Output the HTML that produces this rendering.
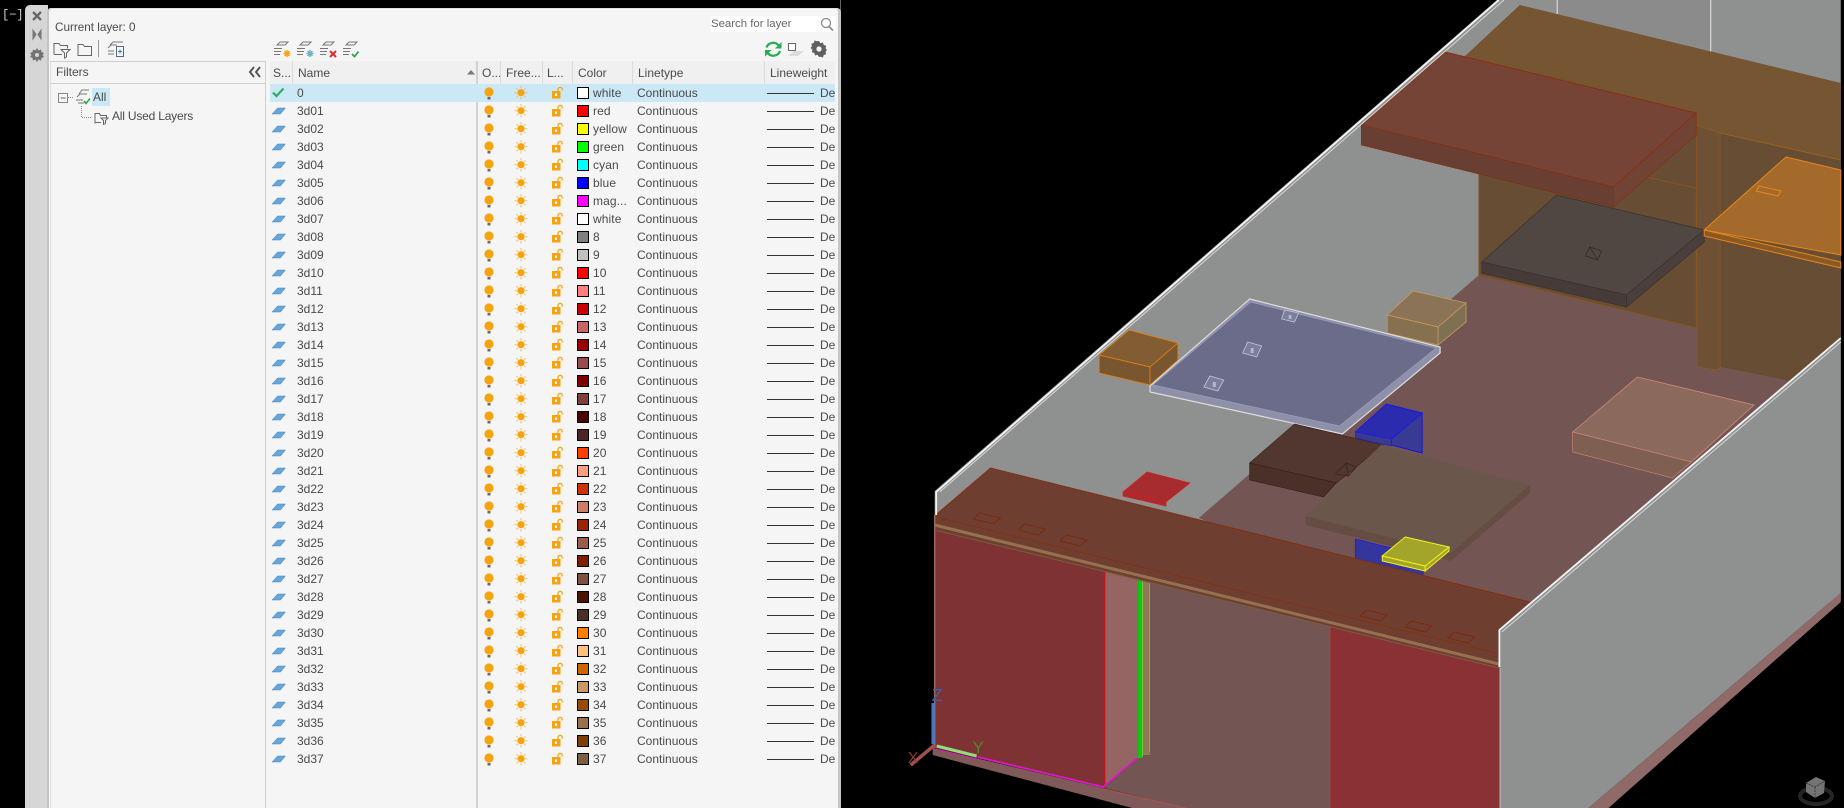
<!DOCTYPE html>
<html lang="en"><head><meta charset="utf-8"><title>Layer Properties</title>
<style>
html,body{margin:0;padding:0;background:#000;width:1844px;height:808px;overflow:hidden}
body{position:relative;font:12px/18px "Liberation Sans",sans-serif;color:#4a4a4a}
.a{position:absolute}
#vp{position:absolute;left:0;top:0}
#strip{position:absolute;left:25px;top:5px;width:23px;height:803px;background:#d6d6d6;border-radius:5px 0 0 0}
#panel{position:absolute;left:48px;top:8px;width:789px;height:800px;background:#f5f5f5;border-left:2px solid #c4c4c4;border-right:3px solid #c6c6c6;border-top:1px solid #e0e0e0;border-radius:4px 4px 0 0;box-sizing:content-box;margin-left:-1px}
#filters{position:absolute;left:50px;top:61px;width:214px;height:747px;border:1px solid #cfcfcf;border-bottom:0;border-left:1px solid #dedede;background:#f5f5f5;box-sizing:content-box}
#fh{height:21px;border-bottom:1px solid #d2d2d2;padding-left:5px;line-height:20px}
#lh{position:absolute;left:270px;top:61px;width:565px;height:23px;background:#f0f0f0}
#lh span{position:absolute;top:0;line-height:24px;height:23px;border-right:1px solid #dcdcdc;box-sizing:border-box;padding-left:4px;white-space:nowrap;overflow:hidden}
#sep{position:absolute;left:476px;top:61px;width:2px;height:747px;background:#d2d2d2}
#rows{position:absolute;left:270px;top:84px;width:565px}
.r{position:relative;height:18px;width:565px;overflow:hidden;white-space:nowrap}
.r svg{position:absolute;left:0;top:0;width:565px;height:18px}
.r b,.r u,.r em,.r s,.r i{position:absolute;font-weight:normal;font-style:normal;text-decoration:none}
.r b{left:27px}
.r i{left:307px;top:3px;width:12px;height:12px;border:1px solid #000;box-sizing:border-box}
.r u{left:323px;letter-spacing:.1px}
.r em{left:367px}
.r s{left:550px;width:15px;overflow:hidden}
</style></head><body>
<svg id="vp" width="1844" height="808" viewBox="0 0 1844 808">
<text x="2" y="18" font-family="Liberation Mono,monospace" font-size="12" fill="#cfcfcf">[−][</text>
<line x1="840.5" y1="0" x2="840.5" y2="808" stroke="#666"/>
<g transform="translate(840 0) scale(.9968 1) translate(-840 0)">
<!-- gray wall -->
<polygon points="1499,0 1844,0 1844,340 1502,640 935,530 935,491" fill="#8f9190"/>
<polygon points="1559,0 1713,0 1713,50 1559,14" fill="#8b8b8b"/>
<line x1="1559.5" y1="0" x2="1559.5" y2="14" stroke="#e8e8e8"/>
<line x1="1713.5" y1="0" x2="1713.5" y2="52" stroke="#e8e8e8"/>
<!-- floor -->
<polygon points="1481,275 1700,328 1700,367 1720,370 1723,367 1787,380 1844,400 1844,600 1502,640 1200,518" fill="#735553"/>
<!-- back wall -->
<polygon points="1522,5 1844,83 1844,160 1723,133 1481,172 1466,57" fill="#755532"/>
<polygon points="1481,100 1723,133 1844,160 1844,400 1787,380 1723,367 1700,328 1481,275" fill="#664d33"/>
<polygon points="1699,125 1723,133 1723,367 1720,370 1700,367" fill="#6e5135" stroke="#8e5a20" stroke-width=".7"/>
<polyline points="1649,177 1699,188 1699,328" fill="none" stroke="#87551f"/>
<polyline points="1723,133 1844,160" fill="none" stroke="#9a6020"/>
<polyline points="1481,173 1481,275 1700,328" fill="none" stroke="#85541f"/>
<!-- dark grey box -->
<polygon points="1559,195 1707,230 1629,295 1484,262" fill="#504642" stroke="#3d322f" stroke-width=".8"/>
<polygon points="1484,262 1629,295 1629,307 1484,273" fill="#463b38" stroke="#3d322f" stroke-width=".8"/>
<polygon points="1629,295 1707,230 1707,242 1629,307" fill="#4a3f3c" stroke="#3d322f" stroke-width=".8"/>
<polygon points="1592,247 1604,251 1600,260 1588,256" fill="none" stroke="#3a2e2a"/><line x1="1592" y1="247" x2="1600" y2="260" stroke="#3a2e2a"/>
<!-- red slab -->
<polygon points="1447,52 1699,113 1616,187 1363,125" fill="#754436" stroke="#8c2f10"/>
<polygon points="1363,125 1616,187 1616,207 1363,145" fill="#6a3f33" stroke="#80300f" stroke-width=".7"/>
<polygon points="1616,187 1699,113 1699,135 1616,207" fill="#704335" stroke="#8c2f10" stroke-width=".7"/>
<!-- orange box -->
<polygon points="1789,157 1844,170 1844,255 1707,230" fill="#a36a2b" stroke="#e8861a"/>
<polygon points="1707,230 1844,262 1844,268 1707,236" fill="#8a5a25" stroke="#e8861a"/>
<polygon points="1762,186 1784,191 1781,196 1759,191" fill="none" stroke="#e8861a"/>
<!-- tan box -->
<polygon points="1415,291 1468,303 1440,327 1389,315" fill="#8b7357" stroke="#c79a5c" stroke-width=".8"/>
<polygon points="1389,315 1440,327 1440,345 1389,333" fill="#85704f" stroke="#c79a5c" stroke-width=".8"/>
<polygon points="1440,327 1468,303 1468,322 1440,345" fill="#807052" stroke="#c79a5c" stroke-width=".8"/>
<!-- orange small box -->
<polygon points="1130,330 1179,343 1151,367 1100,355" fill="#825c32" stroke="#e4810e" stroke-width=".8"/>
<polygon points="1100,355 1151,367 1151,385 1100,373" fill="#7a5630" stroke="#e4810e" stroke-width=".8"/>
<polygon points="1151,367 1179,343 1179,360 1151,385" fill="#7a5630" stroke="#e4810e" stroke-width=".8"/>
<!-- plate -->
<polygon points="1251,299 1442,347 1442,353 1344,434 1151,392 1151,386" fill="#8e90aa" stroke="#ddd" stroke-width="1.2"/>
<polygon points="1252,302 1438,348 1341,426 1154,385" fill="#6a6c8a" stroke="#9a9cb8" stroke-width=".8"/>
<g fill="#7c7e9c" stroke="#c6c7d8" stroke-width=".8">
<polygon points="1286,310 1300,313 1296,322 1283,319"/>
<polygon points="1249,342 1263,346 1258,357 1244,353"/>
<polygon points="1211,376 1225,380 1219,391 1205,387"/>
</g>
<g fill="#b4b6ca">
<rect x="1290" y="315" width="3" height="4"/>
<rect x="1252" y="348" width="3" height="5"/>
<rect x="1214" y="382" width="3" height="5"/>
</g>
<!-- pink box -->
<polygon points="1640,377 1757,405 1694,462 1575,432" fill="#8b6a5d" stroke="#d48a78" stroke-width=".8"/>
<polygon points="1575,432 1694,462 1675,478 1575,452" fill="#7e5f52" stroke="#c88373" stroke-width=".7"/>
<!-- blue box -->
<polygon points="1424,413 1424,453 1393,445 1393,439" fill="#393a94" stroke="#1414e6" stroke-width="1"/>
<polygon points="1388,404 1424,413 1393,439 1357,432" fill="#2b2bae" stroke="#1a1ae8" stroke-width="1"/>
<polygon points="1357,432 1393,439 1393,446 1357,438" fill="#3a3a90" stroke="#1a1ae8" stroke-width=".6"/>
<polygon points="1357,539 1393,548 1425,570 1425,576 1357,559" fill="#35359e" stroke="#1a1ae8" stroke-width=".8"/>
<!-- dark brown box -->
<polygon points="1296,424 1385,445 1338,483 1251,463" fill="#523730" stroke="#41271f" stroke-width=".7"/>
<polygon points="1251,463 1338,483 1325,497 1251,480" fill="#4a3029" stroke="#3a2019" stroke-width=".7"/>
<!-- big floating box -->
<polygon points="1383,445 1532,485 1453,553 1307,516" fill="#6b564c"/>
<polygon points="1307,516 1453,553 1453,561 1307,525" fill="#664d43"/>
<polygon points="1453,553 1532,485 1532,493 1453,561" fill="#664d43"/>
<polygon points="1348,463 1358,467 1350,476 1337,474" fill="none" stroke="#3a2a22"/>
<line x1="1348" y1="463" x2="1350" y2="476" stroke="#3a2a22"/>
<!-- yellow -->
<polygon points="1384,556 1427,566 1427,571 1384,561" fill="#a3a42a" stroke="#f2f21e"/>
<polygon points="1451,547 1427,566 1427,571 1451,551" fill="#a3a42a" stroke="#f2f21e"/>
<polygon points="1407,537 1451,547 1427,566 1384,556" fill="#a3a42a" stroke="#f2f21e"/>
<!-- red square -->
<polygon points="1148,472 1191,483 1167,502 1124,492" fill="#a62c30" stroke="#d81c1c" stroke-width=".8"/>
<polygon points="1124,492 1167,502 1167,506 1124,496" fill="#a62c30" stroke="#d81c1c" stroke-width=".8"/>
<!-- front center -->
<polygon points="1151,560 1333,610 1333,808 1187,808 1105,788 1139,758" fill="#735553"/>
<!-- left red panel -->
<polygon points="935,515 1105,556 1105,788 935,748" fill="#7f3233"/>
<line x1="1105" y1="556" x2="1105" y2="788" stroke="#c5141c" stroke-width="2"/>
<line x1="935" y1="515" x2="935" y2="748" stroke="#9a6a58" stroke-width="1.5"/>
<!-- jamb -->
<polygon points="1106,560 1139,570 1139,758 1106,787" fill="#946563"/>
<rect x="1139" y="570" width="4" height="188" fill="#0ec80e"/>
<rect x="1143" y="572" width="8" height="183" fill="#8f7a55"/>
<line x1="1143.500" y1="572" x2="1143.500" y2="757" stroke="#74c040"/>
<line x1="1150.500" y1="572" x2="1150.500" y2="752" stroke="#b2944e"/>
<!-- right red panel -->
<polygon points="1333,610 1503,650 1503,808 1333,808" fill="#8a3233"/>
<line x1="1333" y1="610" x2="1333" y2="808" stroke="#c5141c" stroke-width="1.500"/>
<!-- right wall -->
<polygon points="1501.500,630 1844,338 1844,593 1591,808 1501.500,808" fill="#8f9190"/>
<polygon points="1844,593 1844,602 1611,808 1591,808" fill="#8f6a68"/>
<line x1="1502.500" y1="668" x2="1502.500" y2="808" stroke="#a8a8a8" stroke-width="1.500"/>
<!-- beam -->
<polygon points="991,468 1532,602 1501,630 1501,667 936,530 936,515" fill="#6e3f31"/>
<polyline points="936,515 991,468 1532,602" fill="none" stroke="#842f14"/>
<line x1="936" y1="517" x2="1498" y2="653" stroke="#842f14"/>
<line x1="935" y1="525" x2="1501" y2="664" stroke="#96704f" stroke-width="3"/>
<line x1="935" y1="530" x2="1501" y2="668" stroke="#7a5c45" stroke-width="1"/>
<g fill="none" stroke="#7c2a10" stroke-width="1.100">
<polygon points="980,513 1001,518 994,524 974,519"/>
<polygon points="1025,524 1046,529 1039,535 1019,530"/>
<polygon points="1067,535 1088,540 1081,546 1061,541"/>
<polygon points="1368,610 1389,615 1382,621 1362,616"/>
<polygon points="1413,621 1434,626 1427,632 1407,627"/>
<polygon points="1456,632 1477,637 1470,643 1450,638"/>
</g>
<!-- wall white lines -->
<polyline points="1501,0 936.500,492 936.500,515" fill="none" stroke="#f4f4f4" stroke-width="1.800"/>
<line x1="1506" y1="0" x2="940" y2="492" stroke="#d8d8d8" stroke-width="1"/>
<polyline points="1844,338 1501.500,630 1501.500,667" fill="none" stroke="#f4f4f4" stroke-width="1.800"/>
<line x1="1844" y1="342" x2="1504" y2="632" stroke="#d8d8d8" stroke-width="1"/>
<!-- bottom strip -->
<polygon points="933,748 1104,788 1187,808 1133,808 933,755" fill="#7f5a58"/>
<line x1="1105" y1="789" x2="1187" y2="808" stroke="#b0504c"/>
<polyline points="978,757 1104,787 1138,758" fill="none" stroke="#dd18c8" stroke-width="1.800"/>
<line x1="936" y1="749" x2="978" y2="759" stroke="#d818c0"/>
<!-- UCS -->
<line x1="937" y1="746" x2="977" y2="756" stroke="#8fe07a" stroke-width="3"/>
<line x1="933.500" y1="703" x2="933.500" y2="744" stroke="#4d77b8" stroke-width="3.500"/>
<line x1="935" y1="745" x2="911" y2="765" stroke="#a05050" stroke-width="3.500"/>
<text x="932" y="701" font-family="Liberation Sans,sans-serif" font-size="18" fill="#3c5fa8">Z</text>
<text x="973" y="753" font-family="Liberation Sans,sans-serif" font-size="17" fill="#4f8a2e">Y</text>
<text x="908" y="763" font-family="Liberation Sans,sans-serif" font-size="16" fill="#8a3a38">X</text>
</g>
<!-- viewcube -->
<ellipse cx="1816" cy="796" rx="16" ry="8" fill="none" stroke="#262626" stroke-width="4"/>
<polygon points="1806,783 1816,777 1825,781 1824,793 1815,798 1806,792" fill="#747474"/>
<polyline points="1806,783 1815,787 1825,781" fill="none" stroke="#3c3c3c" stroke-dasharray="2 1"/>
<line x1="1815" y1="787" x2="1815" y2="798" stroke="#3c3c3c" stroke-dasharray="2 1"/>
</svg>

<div id="strip"></div>
<div id="panel"></div>
<svg class="a" style="left:25px;top:5px" width="23" height="70" viewBox="0 0 23 70">
<path d="M8 7l8 8M16 7l-8 8" stroke="#666" stroke-width="2.300"/>
<path d="M8 25v9l3-4.500zM16 25v9l-3-4.500z" fill="#777" stroke="#777"/>
<path d="M12 43l1.500 2.500 2.500-1 .5 2.500 2.500 1-1.500 2 1.500 2-2.500 1-.5 2.500-2.500-1-1.500 2.500-1.500-2.500-2.500 1-.5-2.500-2.500-1 1.500-2-1.500-2 2.500-1 .5-2.500 2.500 1z" fill="#737373"/>
<circle cx="12" cy="50" r="2" fill="#d6d6d6"/>
</svg>

<div class="a" style="left:55px;top:19px;font-size:11.7px">Current layer: 0</div>
<div class="a" style="left:711px;top:16px;width:125px;height:16px;background:#fff"></div>
<div class="a" style="left:711px;top:15px;color:#666;font-size:11.400px">Search for layer</div>
<svg class="a" style="left:818px;top:16px" width="18" height="16" viewBox="0 0 18 16"><circle cx="8" cy="7" r="4.500" fill="none" stroke="#8a8a8a" stroke-width="1.300"/><path d="M11 10.500l4 4" stroke="#8a8a8a" stroke-width="1.800"/></svg>

<!-- left toolbar -->
<svg class="a" style="left:50px;top:37px" width="80" height="22" viewBox="0 0 80 22" fill="none" stroke="#666">
<path d="M4 17.500V6.500h5l1.500 2h7v3"/><path d="M4 17.500h8"/><path d="M11 12.500h9l-3.500 3.500v4l-2 1v-5z" fill="#f5f5f5"/>
<path d="M28 18.500V7.500h5l1.500 2h7v9z"/>
<path d="M48.500 3v17" stroke="#999"/>
<path d="M60 8l3-3h10M58 11l3-3h6M58 14h6M58 17h6" stroke="#777"/><rect x="66.500" y="9.500" width="7" height="10" stroke="#5a6a78"/><path d="M68 14.500h4M70 12.500v4" stroke="#3e7fb0"/>
</svg>
<div id="filters"><div id="fh">Filters</div></div>
<svg class="a" style="left:248px;top:66px" width="14" height="12" viewBox="0 0 14 12" fill="none" stroke="#555" stroke-width="2"><path d="M6 1L2 6l4 5M12 1L8 6l4 5"/></svg>

<!-- tree -->
<svg class="a" style="left:54px;top:86px" width="60" height="40" viewBox="0 0 60 40" fill="none">
<rect x="4.500" y="7.500" width="9" height="9" stroke="#888" fill="#f7f7f7"/><path d="M6.500 12h5" stroke="#666"/>
<path d="M14 11.500h6M27.500 20v11.500h10" stroke="#888" stroke-dasharray="1 1"/>
<path d="M25 8l3-4h7M23 11l3-3h7M22 14h7M24 17h6" stroke="#777"/><path d="M30 15l2 2.500 4-5" stroke="#2fa24a" stroke-width="1.600"/>
<path d="M41 37.500V27.500h4.500l1 2h6v2M41 36.500h6M47 32h7l-2.500 2.500v3l-2 1v-4z" stroke="#666"/>
</svg>
<div class="a" style="left:92px;top:88px;width:18px;height:18px;background:#cbe8f6;padding-left:1px;box-sizing:border-box;overflow:hidden">All</div>
<div class="a" style="left:112px;top:107px;letter-spacing:-.2px">All Used Layers</div>

<!-- list toolbar -->
<svg class="a" style="left:271px;top:39px" width="90" height="20" viewBox="0 0 90 20" fill="none" stroke="#777">
<g id="st"><path d="M6 6l3-3h8l-3 3zM3 9.500h8M3 12.500h7M3 15.500h6"/></g>
<path d="M16 11v7M12.500 14.500h7M13.500 12l5 5M18.500 12l-5 5" stroke="#f4a612" stroke-width="1.500"/>
<use href="#st" x="23"/><path d="M39 11v7M35.500 14.500h7M36.500 12l5 5M41.500 12l-5 5" stroke="#6fb3c8" stroke-width="1.500"/>
<use href="#st" x="46"/><path d="M59 12l6 6M65 12l-6 6" stroke="#e02a2a" stroke-width="2"/>
<use href="#st" x="69"/><path d="M81 15l2.500 2.500 4-5" stroke="#2fa24a" stroke-width="1.800"/>
</svg>
<!-- refresh etc -->
<svg class="a" style="left:762px;top:39px" width="70" height="20" viewBox="0 0 70 20" fill="none">
<path d="M4.500 8.500A7 7 0 0 1 17 7M18 12A7 7 0 0 1 5.500 13.500" stroke="#28ad56" stroke-width="2.300"/>
<path d="M19.500 3v6.500h-6.500zM3 17.500V11h6.500z" fill="#28ad56"/>
<rect x="26.500" y="4.500" width="7" height="7" fill="#fff" stroke="#666"/>
<path d="M26 17l6-5h10l-6 5z" fill="#dcdcdc"/>
<path d="M57 3l1.500 2.200 2.500-.7.700 2.500 2.500.7-.7 2.500 1.500 1.800-1.500 1.800.7 2.500-2.500.7-.7 2.500-2.500-.7L57 19l-1.500-2.200-2.500.7-.7-2.500-2.500-.7.700-2.500L48.500 10l1.500-1.800-.7-2.500 2.500-.7.700-2.500 2.500.7z" fill="#606060" transform="translate(0 -1)"/>
<circle cx="57" cy="10" r="2.600" fill="#f5f5f5"/>
</svg>

<div id="lh">
<span style="left:0;width:23px;padding-left:3px">S...</span>
<span style="left:23px;width:184px;padding-left:5px">Name</span>
<span style="left:208px;width:23px">O...</span>
<span style="left:231px;width:42px;padding-left:5px">Free...</span>
<span style="left:273px;width:30px">L...</span>
<span style="left:303px;width:60px;padding-left:5px">Color</span>
<span style="left:363px;width:132px;padding-left:5px">Linetype</span>
<span style="left:495px;width:70px;padding-left:5px;border:0">Lineweight</span>
</div>
<svg class="a" style="left:467px;top:69px" width="8" height="6" viewBox="0 0 8 6"><path d="M0 5.500L4 1l4 4.500z" fill="#777"/></svg>
<div id="sep"></div>

<svg width="0" height="0" style="position:absolute">
<symbol id="c" viewBox="0 0 565 18" width="565" height="18">
<circle cx="219" cy="8" r="4.600" fill="#f5a30f"/><rect x="217.500" y="13" width="3" height="2.500" fill="#6a6a6a"/>
<circle cx="251" cy="8.700" r="3.600" fill="#f5a30f"/>
<g stroke="#f7bf5e" stroke-width="1"><path d="M251 2v2.500M251 13v2.500M244.500 8.700h2.500M255 8.700h2.500M246.400 4.100l1.500 1.500M254.100 11.800l1.500 1.500M246.400 13.300l1.500-1.500M254.100 5.600l1.500-1.500"/></g>
<rect x="282" y="7" width="8.500" height="7.500" fill="#f5a30f"/><rect x="285" y="9.500" width="2" height="2.500" fill="#fff"/>
<path d="M288 7V5.500a2.100 2.100 0 0 1 4.200 0V6.500" fill="none" stroke="#f5a30f" stroke-width="1.300"/>
<rect x="497" y="9" width="47" height="1" fill="#333"/>
</symbol>
<symbol id="l" viewBox="0 0 30 18" width="30" height="18"><polygon points="2,12 7.500,6 15.500,6 10.500,12" fill="#66a6da" stroke="#4b87ba" stroke-width=".5"/></symbol>
<symbol id="k" viewBox="0 0 30 18" width="30" height="18"><path d="M3 8.500l3.500 3.500 7-7.500" fill="none" stroke="#2fae5a" stroke-width="2.200"/></symbol>
</svg>

<div class="a" style="left:270px;top:84px;width:565px;height:18px;background:#cbe8f6"></div>
<div id="rows">
<div class="r"><svg><use href="#k"/><use href="#c"/></svg><b>0</b><i style="background:#fff"></i><u>white</u><em>Continuous</em><s>De</s></div>
<div class="r"><svg><use href="#l"/><use href="#c"/></svg><b>3d01</b><i style="background:#f00"></i><u>red</u><em>Continuous</em><s>De</s></div>
<div class="r"><svg><use href="#l"/><use href="#c"/></svg><b>3d02</b><i style="background:#ff0"></i><u>yellow</u><em>Continuous</em><s>De</s></div>
<div class="r"><svg><use href="#l"/><use href="#c"/></svg><b>3d03</b><i style="background:#0f0"></i><u>green</u><em>Continuous</em><s>De</s></div>
<div class="r"><svg><use href="#l"/><use href="#c"/></svg><b>3d04</b><i style="background:#0ff"></i><u>cyan</u><em>Continuous</em><s>De</s></div>
<div class="r"><svg><use href="#l"/><use href="#c"/></svg><b>3d05</b><i style="background:#00f"></i><u>blue</u><em>Continuous</em><s>De</s></div>
<div class="r"><svg><use href="#l"/><use href="#c"/></svg><b>3d06</b><i style="background:#f0f"></i><u>mag...</u><em>Continuous</em><s>De</s></div>
<div class="r"><svg><use href="#l"/><use href="#c"/></svg><b>3d07</b><i style="background:#fff"></i><u>white</u><em>Continuous</em><s>De</s></div>
<div class="r"><svg><use href="#l"/><use href="#c"/></svg><b>3d08</b><i style="background:#808080"></i><u>8</u><em>Continuous</em><s>De</s></div>
<div class="r"><svg><use href="#l"/><use href="#c"/></svg><b>3d09</b><i style="background:#c0c0c0"></i><u>9</u><em>Continuous</em><s>De</s></div>
<div class="r"><svg><use href="#l"/><use href="#c"/></svg><b>3d10</b><i style="background:#f00"></i><u>10</u><em>Continuous</em><s>De</s></div>
<div class="r"><svg><use href="#l"/><use href="#c"/></svg><b>3d11</b><i style="background:#ff7f7f"></i><u>11</u><em>Continuous</em><s>De</s></div>
<div class="r"><svg><use href="#l"/><use href="#c"/></svg><b>3d12</b><i style="background:#c00"></i><u>12</u><em>Continuous</em><s>De</s></div>
<div class="r"><svg><use href="#l"/><use href="#c"/></svg><b>3d13</b><i style="background:#c66"></i><u>13</u><em>Continuous</em><s>De</s></div>
<div class="r"><svg><use href="#l"/><use href="#c"/></svg><b>3d14</b><i style="background:#900"></i><u>14</u><em>Continuous</em><s>De</s></div>
<div class="r"><svg><use href="#l"/><use href="#c"/></svg><b>3d15</b><i style="background:#994c4c"></i><u>15</u><em>Continuous</em><s>De</s></div>
<div class="r"><svg><use href="#l"/><use href="#c"/></svg><b>3d16</b><i style="background:#7f0000"></i><u>16</u><em>Continuous</em><s>De</s></div>
<div class="r"><svg><use href="#l"/><use href="#c"/></svg><b>3d17</b><i style="background:#7f3f3f"></i><u>17</u><em>Continuous</em><s>De</s></div>
<div class="r"><svg><use href="#l"/><use href="#c"/></svg><b>3d18</b><i style="background:#4c0000"></i><u>18</u><em>Continuous</em><s>De</s></div>
<div class="r"><svg><use href="#l"/><use href="#c"/></svg><b>3d19</b><i style="background:#4c2626"></i><u>19</u><em>Continuous</em><s>De</s></div>
<div class="r"><svg><use href="#l"/><use href="#c"/></svg><b>3d20</b><i style="background:#ff3f00"></i><u>20</u><em>Continuous</em><s>De</s></div>
<div class="r"><svg><use href="#l"/><use href="#c"/></svg><b>3d21</b><i style="background:#ff9f7f"></i><u>21</u><em>Continuous</em><s>De</s></div>
<div class="r"><svg><use href="#l"/><use href="#c"/></svg><b>3d22</b><i style="background:#c30"></i><u>22</u><em>Continuous</em><s>De</s></div>
<div class="r"><svg><use href="#l"/><use href="#c"/></svg><b>3d23</b><i style="background:#cc7f66"></i><u>23</u><em>Continuous</em><s>De</s></div>
<div class="r"><svg><use href="#l"/><use href="#c"/></svg><b>3d24</b><i style="background:#992600"></i><u>24</u><em>Continuous</em><s>De</s></div>
<div class="r"><svg><use href="#l"/><use href="#c"/></svg><b>3d25</b><i style="background:#995f4c"></i><u>25</u><em>Continuous</em><s>De</s></div>
<div class="r"><svg><use href="#l"/><use href="#c"/></svg><b>3d26</b><i style="background:#7f1f00"></i><u>26</u><em>Continuous</em><s>De</s></div>
<div class="r"><svg><use href="#l"/><use href="#c"/></svg><b>3d27</b><i style="background:#7f4f3f"></i><u>27</u><em>Continuous</em><s>De</s></div>
<div class="r"><svg><use href="#l"/><use href="#c"/></svg><b>3d28</b><i style="background:#4c1300"></i><u>28</u><em>Continuous</em><s>De</s></div>
<div class="r"><svg><use href="#l"/><use href="#c"/></svg><b>3d29</b><i style="background:#4c2f26"></i><u>29</u><em>Continuous</em><s>De</s></div>
<div class="r"><svg><use href="#l"/><use href="#c"/></svg><b>3d30</b><i style="background:#ff7f00"></i><u>30</u><em>Continuous</em><s>De</s></div>
<div class="r"><svg><use href="#l"/><use href="#c"/></svg><b>3d31</b><i style="background:#ffbf7f"></i><u>31</u><em>Continuous</em><s>De</s></div>
<div class="r"><svg><use href="#l"/><use href="#c"/></svg><b>3d32</b><i style="background:#c60"></i><u>32</u><em>Continuous</em><s>De</s></div>
<div class="r"><svg><use href="#l"/><use href="#c"/></svg><b>3d33</b><i style="background:#c96"></i><u>33</u><em>Continuous</em><s>De</s></div>
<div class="r"><svg><use href="#l"/><use href="#c"/></svg><b>3d34</b><i style="background:#994c00"></i><u>34</u><em>Continuous</em><s>De</s></div>
<div class="r"><svg><use href="#l"/><use href="#c"/></svg><b>3d35</b><i style="background:#99724c"></i><u>35</u><em>Continuous</em><s>De</s></div>
<div class="r"><svg><use href="#l"/><use href="#c"/></svg><b>3d36</b><i style="background:#7f3f00"></i><u>36</u><em>Continuous</em><s>De</s></div>
<div class="r"><svg><use href="#l"/><use href="#c"/></svg><b>3d37</b><i style="background:#7f5f3f"></i><u>37</u><em>Continuous</em><s>De</s></div>
</div>
</body></html>
